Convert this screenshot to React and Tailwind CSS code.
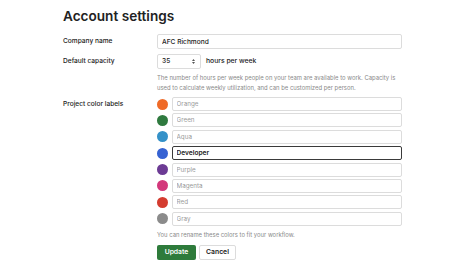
import { useState } from "react";

const colorLabels = [
  { name: "Orange", color: "bg-[#ef6a27]" },
  { name: "Green", color: "bg-[#2f7a3f]" },
  { name: "Aqua", color: "bg-[#3491c8]" },
  { name: "Blue", color: "bg-[#3662d2]", value: "Developer" },
  { name: "Purple", color: "bg-[#6c3b94]" },
  { name: "Magenta", color: "bg-[#d3387b]" },
  { name: "Red", color: "bg-[#d43c30]" },
  { name: "Gray", color: "bg-[#8b8b8b]" },
];

const App = () => {
  const [company, setCompany] = useState("AFC Richmond");
  const [capacity, setCapacity] = useState("35");

  return (
    <div className="min-h-screen bg-white pl-[63px] pt-[7px] font-['Inter',sans-serif] text-[#222]">
      <h1 className="text-[13.6px] leading-[19px] font-semibold">
        Account settings
      </h1>

      {/* Company name */}
      <div className="mt-[8px] flex items-center">
        <label className="w-[94px] text-[6.6px] font-medium text-[#222]">Company name</label>
        <input
          value={company}
          onChange={(e) => setCompany(e.target.value)}
          className="h-[15px] w-[245px] rounded-[2px] border border-[#dcdcdc] px-[4px] text-[6.6px] font-medium outline-none"
        />
      </div>

      {/* Default capacity */}
      <div className="mt-[5px] flex">
        <label className="w-[94px] pt-[4px] text-[6.6px] leading-[7px] font-medium text-[#222]">
          Default capacity
        </label>
        <div className="w-[245px]">
          <div className="flex items-center">
            <div className="flex h-[15px] w-[44px] items-center justify-between rounded-[2px] border border-[#dcdcdc] pl-[4px] pr-[5px]">
              <input
                value={capacity}
                onChange={(e) => setCapacity(e.target.value)}
                className="w-[20px] text-[6.6px] font-medium outline-none"
              />
              <span className="flex flex-col items-center gap-[0.5px] text-[#555]">
                <svg width="3" height="2" viewBox="0 0 3 2"><path d="M0 2 L1.5 0 L3 2 Z" fill="currentColor" /></svg>
                <svg width="3" height="2" viewBox="0 0 3 2"><path d="M0 0 L1.5 2 L3 0 Z" fill="currentColor" /></svg>
              </span>
            </div>
            <span className="ml-[5px] text-[6.8px] font-medium">hours per week</span>
          </div>
          <p className="mt-[4px] text-[5.9px] leading-[9.5px] text-[#8a8a8a]">
            The number of hours per week people on your team are available to work. Capacity is
            <br />
            used to calculate weekly utilization, and can be customized per person.
          </p>
        </div>
      </div>

      {/* Project color labels */}
      <div className="mt-[5px] flex">
        <label className="w-[94px] pt-[4px] text-[6.6px] leading-[7px] font-medium text-[#222]">
          Project color labels
        </label>
        <div className="w-[245px]">
          <div className="flex flex-col gap-[2.4px]">
            {colorLabels.map((c) => (
              <div key={c.name} className="flex items-center">
                <span className={`h-[11px] w-[11px] shrink-0 rounded-full ${c.color}`}></span>
                <input
                  defaultValue={c.value || ""}
                  placeholder={c.name}
                  className={
                    c.value
                      ? "ml-[3.5px] h-[14px] flex-1 rounded-[2px] border border-[#3a3a3a] px-[4px] text-[6.6px] font-semibold outline-none"
                      : "ml-[3.5px] h-[14px] flex-1 rounded-[2px] border border-[#dcdcdc] px-[4px] text-[6.3px] outline-none placeholder:text-[#9a9a9a]"
                  }
                />
              </div>
            ))}
          </div>
          <p className="mt-[4px] text-[5.9px] leading-[9px] text-[#8a8a8a]">
            You can rename these colors to fit your workflow.
          </p>
          <div className="mt-[6px] flex gap-[3px]">
            <button className="h-[15px] w-[39px] rounded-[2px] bg-[#2e7b3b] text-[6.8px] font-semibold text-white">
              Update
            </button>
            <button className="h-[15px] w-[37px] rounded-[2px] border border-[#dcdcdc] bg-white text-[6.8px] font-semibold">
              Cancel
            </button>
          </div>
        </div>
      </div>
    </div>
  );
};

export default App;
